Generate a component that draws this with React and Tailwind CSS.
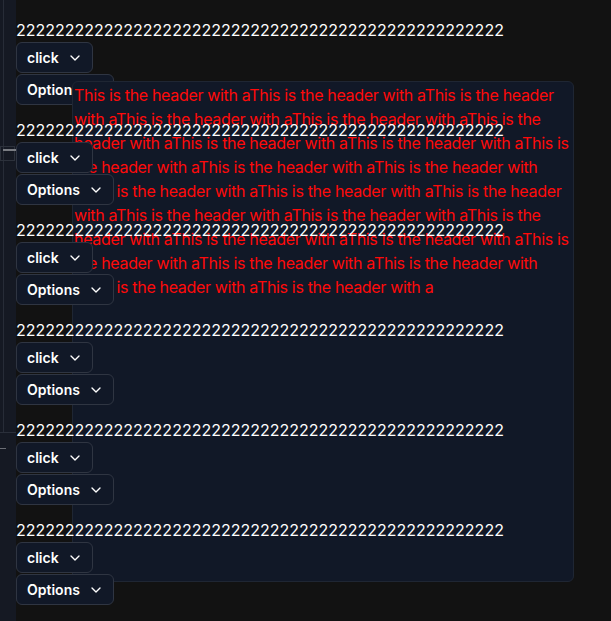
import React from "react";
import { ChevronDown } from "lucide-react";

const TWOS = "2".repeat(50);
const HEADER = "This is the header with a".repeat(24);

function Btn({ label }) {
  return (
    <button className="flex h-[31px] w-fit items-center gap-2 rounded-md border border-[#2f3542] bg-[#111827] pl-2.5 pr-[9px] text-sm font-semibold text-white">
      <span>{label}</span>
      <ChevronDown size={16} strokeWidth={2} />
    </button>
  );
}

function Block({ first }) {
  return (
    <div className={first ? "relative flex flex-col" : "relative z-20 flex flex-col"}>
      <div className="h-6 text-base leading-6 text-white">{TWOS}</div>
      <div className="flex flex-col gap-px">
        <Btn label="click" />
        <Btn label="Options" />
      </div>
      {first && (
        <div className="absolute left-[56px] top-[63px] z-10 h-[501px] w-[502px] rounded-md border border-[#1f2633] bg-[#111827] p-px text-base leading-6 tracking-[-0.33px] text-[#ff0a0a]">
          {HEADER}
        </div>
      )}
    </div>
  );
}

export default function App() {
  return (
    <div
      className="flex min-h-[621px] w-[611px] bg-[#121212]"
      style={{ fontFamily: "Inter, 'Noto Sans', sans-serif" }}
    >
      <div className="relative w-4 flex-none bg-[#151923]">
        <div className="absolute left-[3px] top-0 h-[432px] w-px bg-[#272c37]" />
        <div className="absolute left-0 top-[146px] h-[15px] w-[15px] border border-[#2c313b]" />
        <div className="absolute left-[3px] top-[149px] h-[2px] w-[13px] bg-[#7a7d83]" />
        <div className="absolute left-0 top-[432px] h-px w-4 bg-[#2a2f3a]" />
        <div className="absolute left-0 top-[448px] h-px w-[6px] bg-[#6b6e75]" />
      </div>
      <div className="flex flex-col gap-[13px] pt-[18px]">
        <Block first />
        <Block />
        <Block />
        <Block />
        <Block />
        <Block />
      </div>
    </div>
  );
}
